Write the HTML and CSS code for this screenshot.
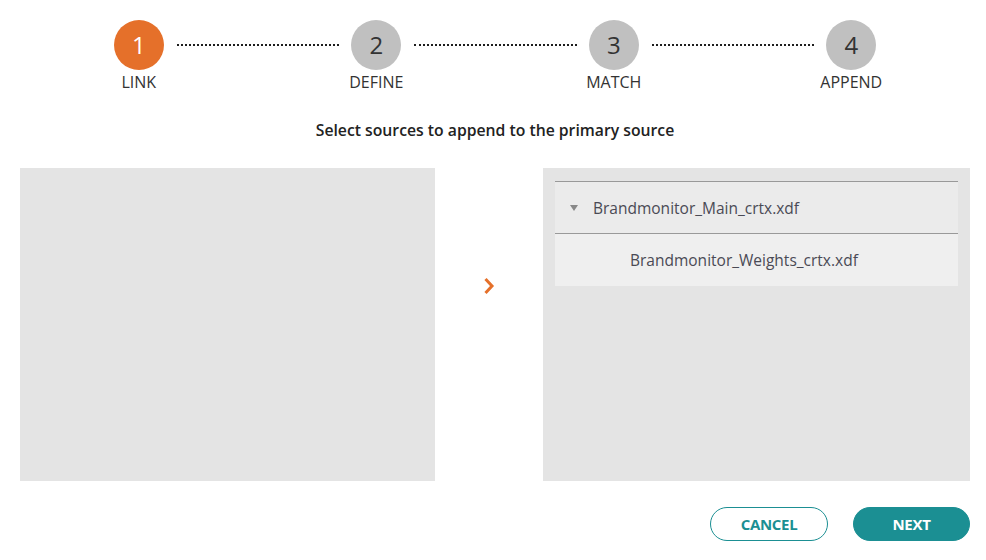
FILE: index.html
```html
<!DOCTYPE html>
<html>
<head>
<meta charset="utf-8">
<link rel="stylesheet" href="styles.css">
</head>
<body>
<div class="wizard">
  <div class="stepper">
    <div class="step active"><div class="circle">1</div><div class="label">LINK</div></div>
    <div class="step"><div class="circle">2</div><div class="label">DEFINE</div></div>
    <div class="step"><div class="circle">3</div><div class="label">MATCH</div></div>
    <div class="step last"><div class="circle">4</div><div class="label">APPEND</div></div>
  </div>
  <div class="title">Select sources to append to the primary source</div>
  <div class="panels">
    <div class="panel left"></div>
    <div class="mover">
      <svg width="12" height="18" viewBox="0 0 12 18"><path d="M2.5 2 L9 9 L2.5 16" fill="none" stroke="#e5702a" stroke-width="3" stroke-linejoin="miter"/></svg>
    </div>
    <div class="panel right">
      <div class="tree">
        <div class="row parent"><span class="caret"></span><span>Brandmonitor_Main_crtx.xdf</span></div>
        <div class="row child"><span>Brandmonitor_Weights_crtx.xdf</span></div>
      </div>
    </div>
  </div>
  <div class="actions">
    <button class="btn cancel">CANCEL</button>
    <button class="btn next">NEXT</button>
  </div>
</div>
</body>
</html>
```
FILE: styles.css
```css
html, body { margin: 0; padding: 0; background: #fff; }
body { font-family: "Open Sans", "Noto Sans", sans-serif; color: #333; }
.wizard { width: 950px; padding: 20px 16px 0 20px; }
.stepper { display: grid; grid-template-columns: repeat(4, 1fr); }
.step { position: relative; display: flex; flex-direction: column; align-items: center; }
.step::after {
  content: ""; position: absolute; top: 24px;
  left: calc(50% + 38px); width: calc(100% - 75px);
  border-top: 2px dotted #1e1e1e;
}
.step.last::after { display: none; }
.circle {
  width: 50px; height: 50px; border-radius: 50%;
  background: #c0c0c0; color: #333;
  display: flex; align-items: center; justify-content: center;
  font-size: 24px; line-height: 1;
}
.step.active .circle { background: #e5702a; color: #fff; }
.label { margin-top: 2px; font-size: 16px; line-height: 20px; color: #333; }
.title { text-align: center; margin-top: 28px; font-size: 15.75px; font-weight: 600; line-height: 20px; color: #222; }
.panels { display: flex; margin-top: 28px; height: 313px; }
.panel { background: #e4e4e4; }
.panel.left { width: 415px; }
.panel.right { width: 427px; padding: 13px 12px 0; box-sizing: border-box; }
.mover { width: 108px; display: flex; align-items: flex-start; justify-content: center; padding-top: 109px; box-sizing: border-box; }
.tree { border-top: 1px solid #999; }
.row { height: 51px; display: flex; align-items: center; font-size: 15.5px; color: #4a4a55; }
.row.parent { background: #ebebeb; border-bottom: 1px solid #999; padding-left: 15px; }
.row.child { background: #efefef; padding-left: 75px; height: 52px; }
.caret { width: 0; height: 0; border-left: 4px solid transparent; border-right: 4px solid transparent; border-top: 6px solid #888; margin-right: 15px; }
.actions { display: flex; justify-content: flex-end; gap: 25px; margin-top: 26px; }
.btn {
  font-family: "Open Sans", sans-serif; font-size: 15px; font-weight: 700;
  height: 34px; border-radius: 17px; box-sizing: border-box; cursor: pointer;
  letter-spacing: -0.3px;
}
.cancel { width: 118px; background: #fff; border: 1px solid #1b8f93; color: #1b8f93; }
.next { width: 117px; background: #1b8f93; border: 1px solid #1b8f93; color: #fff; }
```
